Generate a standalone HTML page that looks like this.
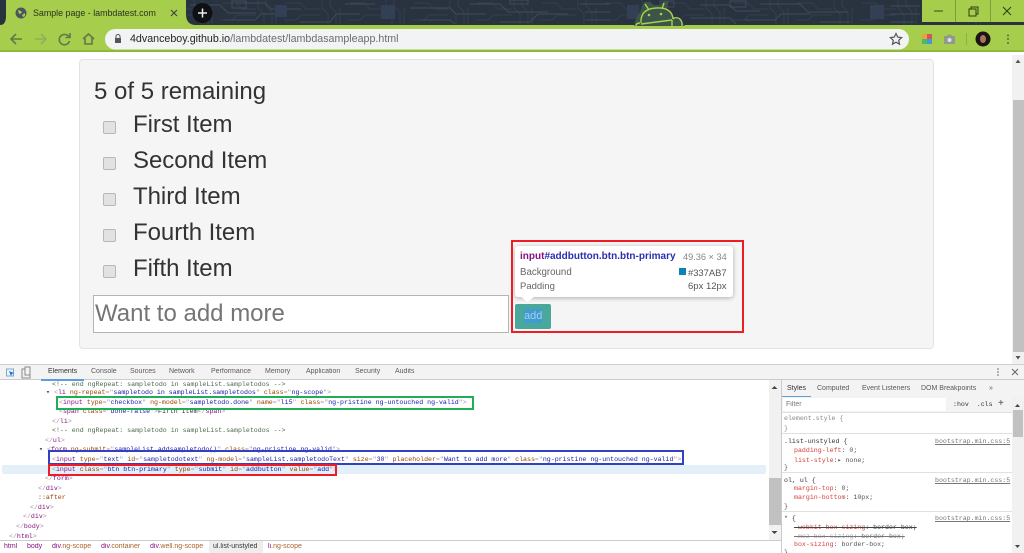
<!DOCTYPE html>
<html><head><meta charset="utf-8"><title>Sample page</title>
<style>
html,body{margin:0;padding:0;width:1024px;height:553px;overflow:hidden;background:#fff;font-family:"Liberation Sans",sans-serif}
.a{position:absolute}
#dt{position:absolute;left:0;top:364px;width:1024px;height:189px;background:#fff;overflow:hidden}
.l{position:absolute;font:6.6px/9px "Liberation Mono",monospace;white-space:pre;color:#a894a6;filter:blur(.35px)}
.l b{font-weight:normal;color:#881280}.l i{font-style:normal;color:#994500}.l u{text-decoration:none;color:#1a1aa6}.l s{text-decoration:none;color:#4c6a4c}
.t{position:absolute;font:7px/10px "Liberation Sans",sans-serif;color:#5a5a5a;white-space:nowrap;filter:blur(.3px)}
.c{position:absolute;font:6.6px/9px "Liberation Mono",monospace;color:#555;white-space:pre;filter:blur(.35px)}
.c em{font-style:normal;color:#d4423c}
.c a{color:#777;text-decoration:underline}
.bx{position:absolute;box-sizing:border-box;border:2px solid}
.it{position:absolute;left:133px;font-size:24px;line-height:28px;color:#333;white-space:nowrap;letter-spacing:-.05px}
.cb{position:absolute;left:103px;width:11px;height:11px;background:#e2e2e2;border:1px solid #b8b8b8;border-radius:2px}
.tip{position:absolute;white-space:nowrap;filter:blur(.2px)}
</style></head><body>

<svg class="a" style="left:0;top:0" width="1024" height="55" viewBox="0 0 1024 55">
<defs><pattern id="p" width="64" height="26" patternUnits="userSpaceOnUse"><path d="M2 0v8l6 6v12M10 0v6l6 6v14M30 3h14l6 6h14M28 20h12l5-5h19M20 8v18" fill="none" stroke="#36414f" stroke-width=".8"/></pattern></defs>
<rect width="1024" height="26" fill="#29323f"/>
<rect width="1024" height="26" fill="url(#p)"/>
<g fill="none" stroke="#3f4b59" stroke-width="1">
<path d="M190 5h30l8 8h28M225 20h30l6-6h20M235 3h30l6 6h30M300 22h30l6-8h24M345 4h30M410 8h40l6 6h30M420 20h30l5 4M470 4h30l8 8h40M500 22h30l8-8h30M580 4h30M585 12h25M585 20h25M700 5h30l6 6h24M690 18h40l6 6M745 20h30l6-6h30M760 4h40l8 8h40M820 22h30M890 6h30M890 14h30M890 22h25"/>
<rect x="232" y="1" width="14" height="7"/><rect x="730" y="1" width="16" height="6"/>
<rect x="660" y="1" width="14" height="6"/><rect x="510" y="0" width="18" height="4"/>
</g>
<g fill="#333f55"><rect x="381" y="5" width="14" height="14"/><rect x="627" y="5" width="12" height="14"/><rect x="870" y="5" width="14" height="14"/><rect x="275" y="5" width="12" height="12"/></g>
<rect y="25" width="1024" height="27" fill="#a6ce4c"/>
<path d="M0 25V0H6V0H186Q186 0 186 14Q186 25 196 25H0Z" fill="#a6ce4c"/>
<path d="M0 25Q6 25 6 16V0H0Z" fill="#29323f"/>
<rect y="50" width="1024" height="2" fill="#8fb83c"/>
<rect y="52" width="1024" height="3" fill="#fff"/>
<!-- android -->
<path d="M634 26q2-10 6-14l4-10h6l4 3h6l4-4h5l-2 8q6 4 8 10l6 1 4 6z" fill="#3c5548"/>
<g fill="none" stroke="#a8d24e" stroke-width="1.4">
<path d="M641 23q-1-14 15-15t17 11"/><path d="M649 10l-4-6M662 9l2-6"/><path d="M641 24l31-4"/>
<path d="M673 19q2-2 5-1t4 5v3M672 20v6"/><path d="M636 26q0-3 4-3"/>
</g>
<circle cx="649" cy="15" r="1.3" fill="#a8d24e"/><circle cx="661" cy="14" r="1.3" fill="#a8d24e"/>
<!-- tab -->
<circle cx="21" cy="13" r="5.5" fill="#4a5560"/><path d="M18 10l3 1 1 2-3 1zM22 15l3-2v3l-2 1z" fill="#a6ce4c"/>
<path d="M171 10l6 6M177 10l-6 6" stroke="#444" stroke-width="1.2"/>
<circle cx="202.500" cy="13" r="10" fill="#0e1013"/>
<path d="M198 13h9M202.500 8.500v9" stroke="#eee" stroke-width="1.5"/>
<!-- window controls -->
<rect x="922" width="102" height="22" fill="#a6ce4c"/>
<path d="M955.500 0v22M990.500 0v22" stroke="#7f9f3c"/>
<path d="M934 11h9" stroke="#3a4a1a" stroke-width="1"/>
<path d="M969 9h7v7h-7zM971 9V7h7v7h-2" fill="none" stroke="#2e3a14"/>
<path d="M1003 7l8 8M1011 7l-8 8" stroke="#2e3a14"/>
<!-- nav -->
<g fill="none" stroke="#66774a" stroke-width="1.600">
<path d="M22 39H11M16 34l-5 5 5 5"/>
<path d="M35 39h11M41 34l5 5-5 5" stroke="#92ad5c"/>
<path d="M69 37a5.200 5.200 0 1 0 .5 4" /><path d="M70 33v4.500h-4.500"/>
<path d="M83 39l5.500-5 5.500 5M85 38v6h7v-6"/>
</g>
<rect x="105" y="29" width="804" height="20.500" rx="10.200" fill="#f1f3f4"/>
<path d="M115 38h6v5h-6z" fill="#555"/><path d="M116 38v-1.500a2 2 0 0 1 4 0V38" fill="none" stroke="#555"/>
<path d="M896 33.500l1.700 3.600 3.900.5-2.900 2.700.8 3.900-3.500-2-3.500 2 .8-3.900-2.900-2.700 3.900-.5z" fill="none" stroke="#555" stroke-width="1.200"/>
<!-- ext -->
<rect x="922" y="34" width="5" height="5" fill="#e8a33c"/><rect x="927" y="34" width="5" height="5" fill="#d9534f"/><rect x="922" y="39" width="5" height="5" fill="#4cb86a"/><rect x="927" y="39" width="5" height="5" fill="#3f9bd6"/>
<path d="M944 36h3l1-1.500h3l1 1.500h3v8h-11z" fill="#8f9a88"/><circle cx="949.500" cy="40" r="2" fill="#dde"/>
<path d="M966.500 33v12" stroke="#8fb14a"/>
<circle cx="983" cy="39" r="7.500" fill="#1a1412"/><ellipse cx="983" cy="39" rx="3" ry="4" fill="#a9745a"/>
<g fill="#5a6a42"><circle cx="1008" cy="35.500" r="1"/><circle cx="1008" cy="39" r="1"/><circle cx="1008" cy="43" r="1"/></g>
</svg>
<div class="a" style="left:33px;top:7px;font-size:8.9px;line-height:12px;color:#2c3320;white-space:nowrap">Sample page - lambdatest.com</div>
<div class="a" style="left:130px;top:33px;font-size:10.68px;line-height:12px;color:#23261f;white-space:nowrap">4dvanceboy.github.io<span style="color:#6a6e72">/lambdatest/lambdasampleapp.html</span></div>

<!-- page -->
<div class="a" style="left:79px;top:59px;width:853px;height:288px;background:#f5f5f5;border:1px solid #e3e3e3;border-radius:4px"></div>
<div class="a" style="left:94px;top:78px;font-size:24px;line-height:28px;color:#333;white-space:nowrap">5 of 5 remaining</div>
<div class="cb" style="top:121px"></div><div class="it" style="top:111px">First Item</div>
<div class="cb" style="top:157px"></div><div class="it" style="top:147px">Second Item</div>
<div class="cb" style="top:193px"></div><div class="it" style="top:183px">Third Item</div>
<div class="cb" style="top:229px"></div><div class="it" style="top:219px">Fourth Item</div>
<div class="cb" style="top:265px"></div><div class="it" style="top:255px">Fifth Item</div>
<div class="a" style="left:93px;top:295px;width:414px;height:36px;background:#fff;border:1px solid #b5b5b5;font-size:24px;line-height:36px;color:#757575;white-space:nowrap;text-indent:1px">Want to add more</div>
<div class="a" style="left:515px;top:304px;width:36px;height:25px;background:#4aa79c;border-radius:2px"></div>
<div class="a" style="left:524px;top:309px;width:18px;height:14px;background:#3f9bd0"></div>
<div class="a" style="left:524px;top:310px;font-size:11px;line-height:13px;color:#a6d0ee">add</div>
<div class="a" style="left:515px;top:246px;width:218px;height:51px;background:#fff;border-radius:3px;box-shadow:0 1px 5px rgba(0,0,0,.3)"></div>
<svg class="a" style="left:520px;top:296px" width="16" height="8"><path d="M0 0h15l-7.500 6z" fill="#fff"/></svg>
<div class="tip" style="left:520px;top:251px;font-size:10px;line-height:12px;font-weight:bold;color:#2a2fae"><span style="color:#881280">input</span>#addbutton.btn.btn-primary</div>
<div class="tip" style="left:683px;top:251px;font-size:9.2px;line-height:12px;color:#888">49.36 × 34</div>
<div class="tip" style="left:520px;top:267px;font-size:9.7px;line-height:12px;color:#666">Background</div>
<div class="a" style="left:679px;top:268px;width:7px;height:7px;background:#0a83b8"></div>
<div class="tip" style="left:688px;top:267px;font-size:9.4px;line-height:12px;color:#555">#337AB7</div>
<div class="tip" style="left:520px;top:281px;font-size:9.5px;line-height:12px;color:#666">Padding</div>
<div class="tip" style="left:688px;top:281px;font-size:9.5px;line-height:12px;color:#555">6px 12px</div>
<div class="bx" style="left:511px;top:240px;width:233px;height:93px;border-color:#ee1c25"></div>

<!-- page scrollbar -->
<div class="a" style="left:1012px;top:55px;width:12px;height:309px;background:#f1f1f1"></div>
<div class="a" style="left:1013px;top:100px;width:11px;height:252px;background:#c1c1c1"></div>
<svg class="a" style="left:1012px;top:55px" width="12" height="309"><path d="M3.500 8L6 4.500 8.500 8zM3.500 301L6 304.500 8.500 301z" fill="#555"/></svg>

<!-- devtools -->
<div id="dt">
<div class="a" style="left:0;top:0;width:1024px;height:16px;background:#f3f3f3;border-top:1px solid #d0d0d0;border-bottom:1px solid #ccc;box-sizing:border-box"></div>
<svg class="a" style="left:0;top:0" width="40" height="16"><rect x="6.500" y="5" width="7" height="7" fill="none" stroke="#7aa7d8"/><path d="M9 7l5 2-2 1-1 2z" fill="#1a73e8"/><rect x="22" y="5" width="8" height="9" fill="none" stroke="#888"/><rect x="25" y="3" width="5" height="8" fill="#f3f3f3" stroke="#888"/></svg>
<div class="t" style="left:48px;top:3px;color:#333">Elements</div>
<div class="a" style="left:41px;top:15px;width:43px;height:2px;background:#5a9de0"></div>
<div class="t" style="left:91px;top:3px">Console</div>
<div class="t" style="left:130px;top:3px">Sources</div>
<div class="t" style="left:169px;top:3px">Network</div>
<div class="t" style="left:211px;top:3px">Performance</div>
<div class="t" style="left:265px;top:3px">Memory</div>
<div class="t" style="left:306px;top:3px">Application</div>
<div class="t" style="left:355px;top:3px">Security</div>
<div class="t" style="left:395px;top:3px">Audits</div>
<svg class="a" style="left:990px;top:0" width="34" height="16"><g fill="#666"><circle cx="8" cy="5" r=".8"/><circle cx="8" cy="8" r=".8"/><circle cx="8" cy="11" r=".8"/></g><path d="M22 5l6 6M28 5l-6 6" stroke="#666"/></svg>

<!-- selected row -->
<div class="a" style="left:2px;top:101px;width:764px;height:9px;background:#e3eff9;border-radius:2px"></div>

<div class="l" style="left:52px;top:16px"><s>&lt;!-- end ngRepeat: sampletodo in sampleList.sampletodos --&gt;</s></div>
<div class="l" style="left:46px;top:24px;color:#555">▾</div>
<div class="l" style="left:54px;top:24px">&lt;<b>li</b> <i>ng-repeat</i>="<u>sampletodo in sampleList.sampletodos</u>" <i>class</i>="<u>ng-scope</u>"&gt;</div>
<div class="l" style="left:59px;top:34px">&lt;<b>input</b> <i>type</i>="<u>checkbox</u>" <i>ng-model</i>="<u>sampletodo.done</u>" <i>name</i>="<u>li5</u>" <i>class</i>="<u>ng-pristine ng-untouched ng-valid</u>"&gt;</div>
<div class="l" style="left:59px;top:43px">&lt;<b>span</b> <i>class</i>="<u>done-false</u>"&gt;<span style="color:#333">Fifth Item</span>&lt;/<b>span</b>&gt;</div>
<div class="l" style="left:52px;top:53px">&lt;/<b>li</b>&gt;</div>
<div class="l" style="left:52px;top:62px"><s>&lt;!-- end ngRepeat: sampletodo in sampleList.sampletodos --&gt;</s></div>
<div class="l" style="left:45px;top:72px">&lt;/<b>ul</b>&gt;</div>
<div class="l" style="left:39px;top:81px;color:#555">▾</div>
<div class="l" style="left:47px;top:81px">&lt;<b>form</b> <i>ng-submit</i>="<u>sampleList.addsampletodo()</u>" <i>class</i>="<u>ng-pristine ng-valid</u>"&gt;</div>
<div class="l" style="left:52px;top:91px">&lt;<b>input</b> <i>type</i>="<u>text</u>" <i>id</i>="<u>sampletodotext</u>" <i>ng-model</i>="<u>sampleList.sampletodoText</u>" <i>size</i>="<u>30</u>" <i>placeholder</i>="<u>Want to add more</u>" <i>class</i>="<u>ng-pristine ng-untouched ng-valid</u>"&gt;</div>
<div class="l" style="left:52px;top:101px">&lt;<b>input</b> <i>class</i>="<u>btn btn-primary</u>" <i>type</i>="<u>submit</u>" <i>id</i>="<u>addbutton</u>" <i>value</i>="<u>add</u>"&gt;</div>
<div class="l" style="left:45px;top:110px">&lt;/<b>form</b>&gt;</div>
<div class="l" style="left:38px;top:120px">&lt;/<b>div</b>&gt;</div>
<div class="l" style="left:38px;top:129px;color:#994500">::after</div>
<div class="l" style="left:30px;top:139px">&lt;/<b>div</b>&gt;</div>
<div class="l" style="left:23px;top:148px">&lt;/<b>div</b>&gt;</div>
<div class="l" style="left:16px;top:158px">&lt;/<b>body</b>&gt;</div>
<div class="l" style="left:9px;top:168px">&lt;/<b>html</b>&gt;</div>

<div class="bx" style="left:56px;top:32px;width:418px;height:14px;border-color:#1fae55"></div>
<div class="bx" style="left:48px;top:86px;width:636px;height:15px;border-color:#3440c4"></div>
<div class="bx" style="left:48px;top:100px;width:289px;height:12px;border-color:#ee1c25"></div>

<!-- left scrollbar -->
<div class="a" style="left:769px;top:16px;width:12px;height:160px;background:#f1f1f1"></div>
<div class="a" style="left:769px;top:114px;width:12px;height:47px;background:#c1c1c1"></div>
<svg class="a" style="left:769px;top:16px" width="12" height="160"><path d="M2.500 9L5.500 6 8.500 9zM2.500 151L5.500 154 8.500 151z" fill="#444"/></svg>

<!-- breadcrumbs -->
<div class="a" style="left:0;top:176px;width:781px;height:13px;background:#fff;border-top:1px solid #ccc;box-sizing:border-box"></div>
<div class="a" style="left:209px;top:177px;width:54px;height:12px;background:#eee"></div>
<div class="t" style="left:4px;top:178px;color:#881280">html</div>
<div class="t" style="left:27px;top:178px;color:#881280">body</div>
<div class="t" style="left:52px;top:178px;color:#881280">div<span style="color:#a8632e">.ng-scope</span></div>
<div class="t" style="left:101px;top:178px;color:#881280">div<span style="color:#a8632e">.container</span></div>
<div class="t" style="left:150px;top:178px;color:#881280">div<span style="color:#a8632e">.well.ng-scope</span></div>
<div class="t" style="left:213px;top:178px;color:#333">ul.list-unstyled</div>
<div class="t" style="left:268px;top:178px;color:#881280">li<span style="color:#a8632e">.ng-scope</span></div>

<!-- styles pane -->
<div class="a" style="left:781px;top:16px;width:243px;height:173px;background:#fff;border-left:1px solid #ccc;box-sizing:border-box"></div>
<div class="a" style="left:781px;top:16px;width:243px;height:17px;background:#f3f3f3;border-left:1px solid #ccc;box-sizing:border-box"></div>
<div class="t" style="left:787px;top:20px;color:#333">Styles</div>
<div class="a" style="left:782px;top:32px;width:29px;height:2px;background:#5a9de0"></div>
<div class="t" style="left:817px;top:20px">Computed</div>
<div class="t" style="left:862px;top:20px">Event Listeners</div>
<div class="t" style="left:921px;top:20px">DOM Breakpoints</div>
<div class="t" style="left:989px;top:20px">»</div>
<div class="a" style="left:782px;top:33px;width:230px;height:15px;background:#f3f3f3"></div>
<div class="a" style="left:783px;top:34px;width:163px;height:13px;background:#fff"></div>
<div class="t" style="left:786px;top:36px;color:#777">Filter</div>
<div class="c" style="left:953px;top:36px;color:#333">:hov  .cls</div>
<div class="t" style="left:998px;top:35px;font-size:10px;color:#444">+</div>
<div class="a" style="left:782px;top:48px;width:230px;height:1px;background:#e0e0e0"></div>

<div class="c" style="left:784px;top:50px;color:#888">element.style {</div>
<div class="c" style="left:784px;top:60px;color:#888">}</div>
<div class="a" style="left:782px;top:69px;width:230px;height:1px;background:#e0e0e0"></div>
<div class="c" style="left:784px;top:73px;color:#333">.list-unstyled {</div>
<div class="c" style="left:935px;top:73px"><a>bootstrap.min.css:5</a></div>
<div class="c" style="left:794px;top:82px"><em>padding-left</em>: 0;</div>
<div class="c" style="left:794px;top:92px"><em>list-style</em>:▸ none;</div>
<div class="c" style="left:784px;top:99px">}</div>
<div class="a" style="left:782px;top:108px;width:230px;height:1px;background:#e0e0e0"></div>
<div class="c" style="left:784px;top:112px;color:#333">ol, ul {</div>
<div class="c" style="left:935px;top:112px"><a>bootstrap.min.css:5</a></div>
<div class="c" style="left:794px;top:120px"><em>margin-top</em>: 0;</div>
<div class="c" style="left:794px;top:129px"><em>margin-bottom</em>: 10px;</div>
<div class="c" style="left:784px;top:138px">}</div>
<div class="a" style="left:782px;top:147px;width:230px;height:1px;background:#e0e0e0"></div>
<div class="c" style="left:784px;top:150px;color:#333">* {</div>
<div class="c" style="left:935px;top:150px"><a>bootstrap.min.css:5</a></div>
<div class="c" style="left:794px;top:159px;text-decoration:line-through;color:#444"><em>-webkit-box-sizing</em>: border-box;</div>
<div class="c" style="left:794px;top:168px;text-decoration:line-through;color:#777"><em style="color:#aaa">-moz-box-sizing</em>: border-box;</div>
<div class="c" style="left:794px;top:176px"><em>box-sizing</em>: border-box;</div>
<div class="c" style="left:784px;top:184px">}</div>

<div class="a" style="left:1012px;top:33px;width:12px;height:156px;background:#f1f1f1"></div>
<div class="a" style="left:1013px;top:46px;width:10px;height:27px;background:#c1c1c1"></div>
<svg class="a" style="left:1012px;top:33px" width="12" height="156"><path d="M3 10L5.500 7 8 10zM3 148L5.500 151 8 148z" fill="#444"/></svg>
</div>
</body></html>
